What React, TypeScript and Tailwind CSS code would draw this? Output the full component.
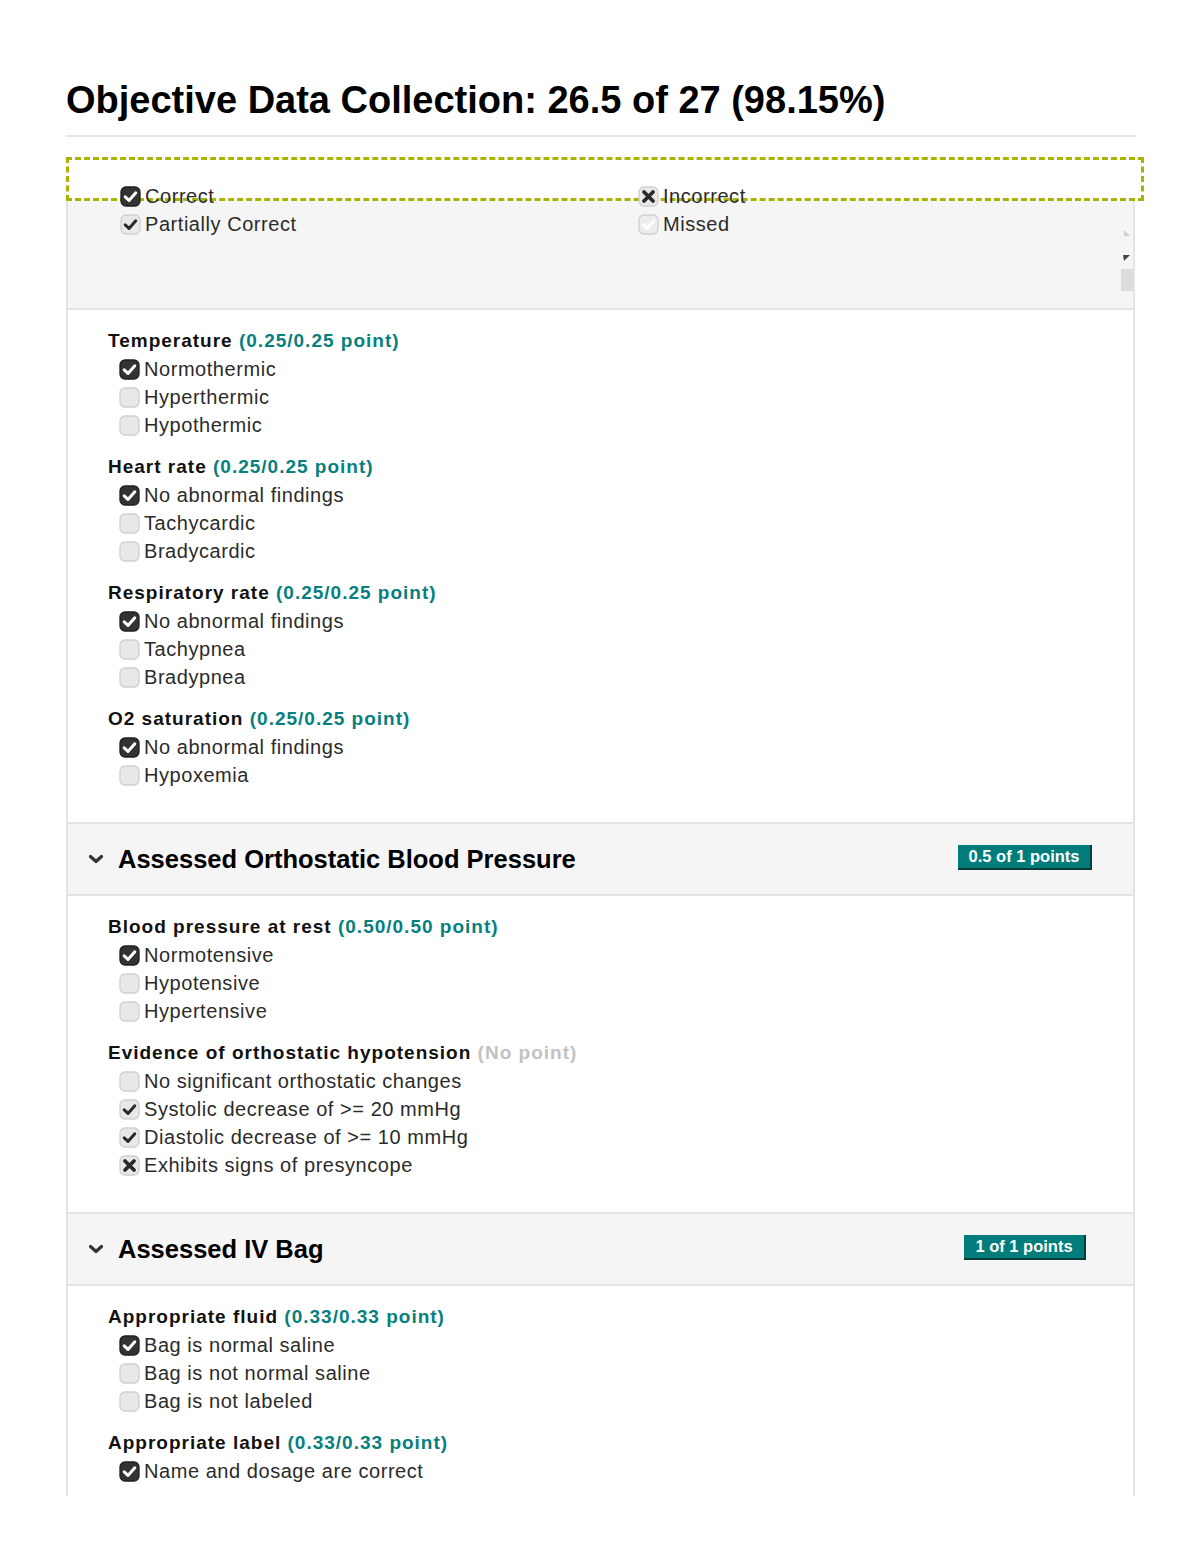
type Mark = 'correct' | 'partial' | 'incorrect' | 'missed' | 'empty';

interface Group {
  title: string;
  points: string;
  noPoint?: boolean;
  items: [Mark, string][];
}

interface Section {
  title: string;
  badge: string;
  groups: Group[];
  last?: boolean;
}

const vitals: Group[] = [
  {
    title: 'Temperature',
    points: '(0.25/0.25 point)',
    items: [
      ['correct', 'Normothermic'],
      ['empty', 'Hyperthermic'],
      ['empty', 'Hypothermic'],
    ],
  },
  {
    title: 'Heart rate',
    points: '(0.25/0.25 point)',
    items: [
      ['correct', 'No abnormal findings'],
      ['empty', 'Tachycardic'],
      ['empty', 'Bradycardic'],
    ],
  },
  {
    title: 'Respiratory rate',
    points: '(0.25/0.25 point)',
    items: [
      ['correct', 'No abnormal findings'],
      ['empty', 'Tachypnea'],
      ['empty', 'Bradypnea'],
    ],
  },
  {
    title: 'O2 saturation',
    points: '(0.25/0.25 point)',
    items: [
      ['correct', 'No abnormal findings'],
      ['empty', 'Hypoxemia'],
    ],
  },
];

const sections: Section[] = [
  {
    title: 'Assessed Orthostatic Blood Pressure',
    badge: '0.5 of 1 points',
    groups: [
      {
        title: 'Blood pressure at rest',
        points: '(0.50/0.50 point)',
        items: [
          ['correct', 'Normotensive'],
          ['empty', 'Hypotensive'],
          ['empty', 'Hypertensive'],
        ],
      },
      {
        title: 'Evidence of orthostatic hypotension',
        points: '(No point)',
        noPoint: true,
        items: [
          ['empty', 'No significant orthostatic changes'],
          ['partial', 'Systolic decrease of >= 20 mmHg'],
          ['partial', 'Diastolic decrease of >= 10 mmHg'],
          ['incorrect', 'Exhibits signs of presyncope'],
        ],
      },
    ],
  },
  {
    title: 'Assessed IV Bag',
    badge: '1 of 1 points',
    last: true,
    groups: [
      {
        title: 'Appropriate fluid',
        points: '(0.33/0.33 point)',
        items: [
          ['correct', 'Bag is normal saline'],
          ['empty', 'Bag is not normal saline'],
          ['empty', 'Bag is not labeled'],
        ],
      },
      {
        title: 'Appropriate label',
        points: '(0.33/0.33 point)',
        items: [['correct', 'Name and dosage are correct']],
      },
    ],
  },
];

function Box({ mark }: { mark: Mark }) {
  const dark = mark === 'correct';
  return (
    <svg width="21" height="21" viewBox="0 0 21 21" className="shrink-0">
      <rect
        x="1"
        y="1"
        width="19"
        height="19"
        rx="5"
        fill={dark ? '#333333' : mark === 'missed' ? '#ededed' : '#e8e8e8'}
        stroke={dark ? '#1f1f1f' : '#cfcfcf'}
        strokeWidth="1.3"
      />
      {(mark === 'correct' || mark === 'partial' || mark === 'missed') && (
        <path
          d="M5.2 10.8 L9 14.4 L15.8 6.8"
          fill="none"
          stroke={mark === 'partial' ? '#2a2a2a' : '#ffffff'}
          strokeWidth="3"
          strokeLinecap="round"
          strokeLinejoin="round"
        />
      )}
      {mark === 'incorrect' && (
        <path
          d="M6 6 L15 15 M15 6 L6 15"
          fill="none"
          stroke="#2a2a2a"
          strokeWidth="3.8"
          strokeLinecap="round"
        />
      )}
    </svg>
  );
}

function Option({ mark, label }: { mark: Mark; label: string }) {
  return (
    <div className="flex h-[28px] items-center gap-[4px]">
      <Box mark={mark} />
      <span className="text-[20px] tracking-[0.55px] text-[#2b2b2b]">{label}</span>
    </div>
  );
}

function GroupBlock({ group }: { group: Group }) {
  return (
    <div>
      <div className="h-[28px] text-[19px] font-bold leading-[28px] tracking-[1px]">
        <span className="text-[#111]">{group.title}</span>{' '}
        <span className={group.noPoint ? 'text-[#c2c2c2]' : 'text-[#06807e]'}>{group.points}</span>
      </div>
      <div className="pl-[11px]">
        {group.items.map(([mark, label], i) => (
          <Option key={i} mark={mark} label={label} />
        ))}
      </div>
    </div>
  );
}

function Body({ groups, last }: { groups: Group[]; last?: boolean }) {
  return (
    <div
      className={`flex flex-col gap-[14px] border-x-2 border-[#e4e4e4] bg-white pl-[40px] pt-[17px] ${
        last ? 'pb-[11px]' : 'border-b-2 pb-[33px]'
      }`}
    >
      {groups.map((g) => (
        <GroupBlock key={g.title} group={g} />
      ))}
    </div>
  );
}

function SectionHeader({ title, badge }: { title: string; badge: string }) {
  return (
    <div className="flex h-[72px] items-center border-x-2 border-b-2 border-[#e4e4e4] bg-[#f5f5f5] pl-[20px]">
      <svg width="16" height="10" viewBox="0 0 16 10" className="shrink-0">
        <path d="M2.5 2.5 L8 7.5 L13.5 2.5" fill="none" stroke="#333" strokeWidth="3.2" strokeLinecap="round" strokeLinejoin="round" />
      </svg>
      <h2 className="ml-[14px] flex-1 text-[25.5px] font-bold text-black">{title}</h2>
      <div className="mr-[8px] -mt-[4px] flex w-[200px] justify-center">
        <span className="h-[25px] border-b-2 border-r-2 border-[#073c3b] bg-[#007d7a] px-[11px] text-[16.5px] font-bold leading-[23px] text-white">
          {badge}
        </span>
      </div>
    </div>
  );
}

export default function App() {
  return (
    <div className="min-h-[1553px] bg-white pl-[66px] pr-[65px] pt-[76px] pb-[56px]" style={{ fontFamily: '"Liberation Sans", Arial, sans-serif' }}>
      <h1 className="text-[38px] font-bold leading-[48px] text-black">Objective Data Collection: 26.5 of 27 (98.15%)</h1>
      <div className="mt-[11px] h-[2px] bg-[#e6e6e6]" />

      {/* focus outline over the legend */}
      <div className="mt-[20px] -mr-[9px] h-[44px] border-[3px] border-dashed border-[#a9b400]" />

      <div className="flex h-[109px] items-start border-x-2 border-b-2 border-[#e4e4e4] bg-[#f5f5f5]">
        <div className="relative -mt-[19px] grid flex-1 grid-cols-[518px_1fr] pl-[52px]">
          <div>
            <Option mark="correct" label="Correct" />
            <Option mark="partial" label="Partially Correct" />
          </div>
          <div>
            <Option mark="incorrect" label="Incorrect" />
            <Option mark="missed" label="Missed" />
          </div>
        </div>
        <div className="mt-[28px] flex w-[12px] flex-col items-center">
          <svg width="8" height="8" viewBox="0 0 8 8">
            <path d="M1 1 L7 7 L1 7 Z" fill="#d0d0d0" />
          </svg>
          <svg width="8" height="8" viewBox="0 0 8 8" className="mt-[17px]">
            <path d="M0 1 L7 1 L1 7 Z" fill="#444" />
          </svg>
          <div className="mt-[7px] h-[22px] w-[12px] bg-[#dcdcdc]" />
        </div>
      </div>

      <Body groups={vitals} />

      {sections.map((s) => (
        <div key={s.title}>
          <SectionHeader title={s.title} badge={s.badge} />
          <Body groups={s.groups} last={s.last} />
        </div>
      ))}
    </div>
  );
}
